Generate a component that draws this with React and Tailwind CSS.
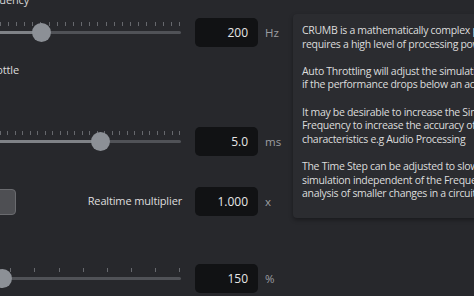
import React from "react";

const font = { fontFamily: '"Open Sans", "Noto Sans", sans-serif' };

function Ticks({ gap, count }) {
  return (
    <div className="absolute left-0 top-[-9px] w-[181px] h-[4px] overflow-hidden flex justify-end pr-[1px]" style={{ columnGap: gap }}>
      {Array.from({ length: count }).map((_, i) => (
        <div key={i} className="w-[1px] h-[4px] shrink-0 bg-[#66686d]" />
      ))}
    </div>
  );
}

function Slider({ thumb, gap, count }) {
  return (
    <div className="relative w-[181px] h-[3px]">
      <Ticks gap={gap} count={count} />
      <div className="absolute inset-0 bg-[#505257] rounded-full" />
      <div className="absolute left-0 top-0 h-[3px] bg-[#7f8287]" style={{ width: thumb }} />
      <div
        className="absolute top-[-8px] w-[19px] h-[19px] rounded-full bg-[#8c9096]"
        style={{ left: thumb - 9.5 }}
      />
    </div>
  );
}

function NumBox({ value, unit }) {
  return (
    <div className="flex items-center">
      <div className="ml-[14px] w-[63px] h-[29px] rounded-[5px] bg-[#111214] flex items-center justify-end pr-[10px] text-[12px] text-[#e6e6e6]">
        {value}
      </div>
      <div className="ml-[7px] text-[11.5px] text-[#9c9ea2]">{unit}</div>
    </div>
  );
}

const lines = [
  "CRUMB is a mathematically complex program and",
  "requires a high level of processing power.",
  "",
  "Auto Throttling will adjust the simulation speed",
  "if the performance drops below an acceptable level.",
  "",
  "It may be desirable to increase the Simulation",
  "Frequency to increase the accuracy of certain",
  "characteristics e.g Audio Processing",
  "",
  "The Time Step can be adjusted to slow down the",
  "simulation independent of the Frequency to allow",
  "analysis of smaller changes in a circuit.",
];

export default function App() {
  return (
    <div className="w-[474px] h-[296px] overflow-hidden bg-[#27282c] flex" style={font}>
      <div className="w-[293px] shrink-0 flex flex-col">
        <div className="mt-[-12px] h-[24px] w-[29px] flex items-center justify-end whitespace-nowrap text-[11px] tracking-[-0.15px] text-[#d6d6d6]">
          Simulation Frequency
        </div>
        <div className="mt-[6px] h-[29px] flex items-center">
          <Slider thumb={41.5} gap="7.17px" count={23} />
          <NumBox value="200" unit="Hz" />
        </div>
        <div className="mt-[11px] h-[24px] w-[19px] flex items-center justify-end whitespace-nowrap text-[11px] tracking-[-0.15px] text-[#dcdcdc]">
          Auto Throttle
        </div>
        <div className="mt-[45px] h-[29px] flex items-center">
          <Slider thumb={100} gap="6.47px" count={25} />
          <NumBox value="5.0" unit="ms" />
        </div>
        <div className="mt-[31px] h-[29px] flex items-center">
          <div className="w-[181px] flex items-center justify-between">
            <div className="ml-[-20px] w-[36px] h-[26px] rounded-[4px] bg-[#4e4f53] border border-[#6a6b6f]" />
            <div className="mr-[-1px] text-[11px] tracking-[-0.15px] text-[#dedede] whitespace-nowrap">Realtime multiplier</div>
          </div>
          <NumBox value="1.000" unit="x" />
        </div>
        <div className="mt-[48px] h-[29px] flex items-center">
          <Slider thumb={2} gap="23.1px" count={8} />
          <NumBox value="150" unit="%" />
        </div>
      </div>
      <div className="mt-[14px] w-[230px] h-[204px] shrink-0 rounded-[4px] bg-[#2b2c30] shadow-[0_2px_4px_rgba(0,0,0,0.35)] pl-[9px] pt-[10px]">
        {lines.map((l, i) => (
          <div key={i} className="h-[13.6px] leading-[13.6px] text-[10.5px] tracking-[-0.3px] text-[#dcdcdc] whitespace-nowrap">
            {l}
          </div>
        ))}
      </div>
    </div>
  );
}
